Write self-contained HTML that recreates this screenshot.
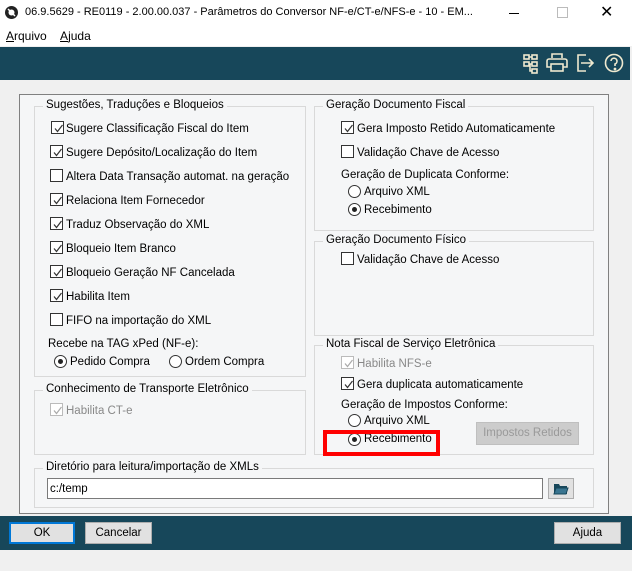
<!DOCTYPE html>
<html><head><meta charset="utf-8"><style>
*{box-sizing:border-box;margin:0;padding:0}
body{width:632px;height:571px;position:relative;overflow:hidden;background:#f0f0f0;font-family:"Liberation Sans",sans-serif;font-size:11.5px;color:#000}
.a{position:absolute}
.gb{position:absolute;border:1px solid #d9d9d9}
.gl{position:absolute;top:-8px;left:8px;background:#f5f6f7;padding:0 3px;white-space:nowrap;color:#000}
.cb{position:absolute;width:13px;height:13px;border:1px solid #333;background:#fff}
.cb.d{border-color:#bbb}
.cb svg{position:absolute;left:1px;top:1px}
.t{position:absolute;white-space:nowrap;margin-top:2px}
.rd{position:absolute;width:13px;height:13px;border:1px solid #333;border-radius:50%;background:#fff;margin-top:1px}
.rd.on::after{content:"";position:absolute;left:3px;top:3px;width:5px;height:5px;border-radius:50%;background:#222}
.btn{position:absolute;background:#e1e1e1;border:1px solid #adadad;text-align:center;line-height:20px}
</style></head><body>
<div class="a" style="left:0;top:0;width:632px;height:46px;background:#fff"></div>
<svg class="a" style="left:4px;top:5px" width="15" height="15" viewBox="0 0 15 15"><circle cx="7.5" cy="7.5" r="6.5" fill="#222"/><circle cx="7.5" cy="7.5" r="3" fill="#fff"/><path d="M4 4 L11 11" stroke="#fff" stroke-width="1.5"/></svg>
<div class="a" style="left:25px;top:6px;font-size:11px;white-space:nowrap">06.9.5629 - RE0119 - 2.00.00.037 - Parâmetros do Conversor NF-e/CT-e/NFS-e - 10 - EM...</div>
<div class="a" style="left:509px;top:13px;width:10px;height:1px;background:#000"></div>
<div class="a" style="left:557px;top:7px;width:11px;height:11px;border:1px solid #bbb"></div>
<div class="a" style="left:600px;top:2px;font-size:16px">✕</div>
<div class="a" style="left:6px;top:29px;font-size:12px;white-space:nowrap"><u>A</u>rquivo &nbsp; &nbsp;<u>A</u>juda</div>
<div class="a" style="left:0;top:47px;width:630px;height:33px;background:#17475a"></div>
<svg class="a" style="left:520px;top:50px" width="110" height="26" viewBox="0 0 110 26" fill="none" stroke="#efe9cf" stroke-width="1.6">
<rect x="4" y="5" width="5" height="4"/><rect x="4" y="12" width="5" height="4"/><rect x="12" y="5" width="5" height="4"/><rect x="12" y="12" width="5" height="4"/><rect x="12" y="19" width="5" height="4"/><path d="M9 7h3M9 14h3M10 14v7h2"/>
<path d="M32 8V4h10v4M29 9h16a2 2 0 0 1 2 2v6h-4M31 17h-4v-6a2 2 0 0 1 2-2"/><rect x="31" y="14" width="12" height="7"/>
<path d="M66 5h-8v16h8M61 13h12M69 9l4 4-4 4"/>
<circle cx="94" cy="13" r="8.5"/><path d="M91 11a3 3 0 1 1 4 3v2"/><circle cx="95" cy="19" r=".6" fill="#efe9cf"/>
</svg>
<div class="a" style="left:19px;top:94px;width:590px;height:420px;border:1px solid #808080;background:#f5f6f7"></div>

<div class="gb" style="left:34px;top:106px;width:272px;height:271px"><div class="gl">Sugestões, Traduções e Bloqueios</div></div>
<div class="gb" style="left:34px;top:390px;width:272px;height:65px"><div class="gl">Conhecimento de Transporte Eletrônico</div></div>
<div class="gb" style="left:314px;top:106px;width:280px;height:125px"><div class="gl">Geração Documento Fiscal</div></div>
<div class="gb" style="left:314px;top:241px;width:280px;height:95px"><div class="gl">Geração Documento Físico</div></div>
<div class="gb" style="left:314px;top:345px;width:280px;height:110px"><div class="gl">Nota Fiscal de Serviço Eletrônica</div></div>
<div class="gb" style="left:34px;top:468px;width:560px;height:40px"><div class="gl">Diretório para leitura/importação de XMLs</div></div>

<div class="cb" style="left:51px;top:121px"><svg width="11" height="11"><path d="M2 5.5l2.5 3L9.5 2" stroke="#333" fill="none" stroke-width="1.2"/></svg></div><div class="t" style="left:66px;top:121px">Sugere Classificação Fiscal do Item</div>
<div class="cb" style="left:50px;top:145px"><svg width="11" height="11"><path d="M2 5.5l2.5 3L9.5 2" stroke="#333" fill="none" stroke-width="1.2"/></svg></div><div class="t" style="left:66px;top:145px">Sugere Depósito/Localização do Item</div>
<div class="cb" style="left:50px;top:169px"></div><div class="t" style="left:66px;top:169px">Altera Data Transação automat. na geração</div>
<div class="cb" style="left:50px;top:193px"><svg width="11" height="11"><path d="M2 5.5l2.5 3L9.5 2" stroke="#333" fill="none" stroke-width="1.2"/></svg></div><div class="t" style="left:66px;top:193px">Relaciona Item Fornecedor</div>
<div class="cb" style="left:50px;top:217px"><svg width="11" height="11"><path d="M2 5.5l2.5 3L9.5 2" stroke="#333" fill="none" stroke-width="1.2"/></svg></div><div class="t" style="left:66px;top:217px">Traduz Observação do XML</div>
<div class="cb" style="left:50px;top:241px"><svg width="11" height="11"><path d="M2 5.5l2.5 3L9.5 2" stroke="#333" fill="none" stroke-width="1.2"/></svg></div><div class="t" style="left:66px;top:241px">Bloqueio Item Branco</div>
<div class="cb" style="left:50px;top:265px"><svg width="11" height="11"><path d="M2 5.5l2.5 3L9.5 2" stroke="#333" fill="none" stroke-width="1.2"/></svg></div><div class="t" style="left:66px;top:265px">Bloqueio Geração NF Cancelada</div>
<div class="cb" style="left:50px;top:289px"><svg width="11" height="11"><path d="M2 5.5l2.5 3L9.5 2" stroke="#333" fill="none" stroke-width="1.2"/></svg></div><div class="t" style="left:66px;top:289px">Habilita Item</div>
<div class="cb" style="left:50px;top:313px"></div><div class="t" style="left:66px;top:313px">FIFO na importação do XML</div>
<div class="t" style="left:48px;top:336px">Recebe na TAG xPed (NF-e):</div>
<div class="rd on" style="left:54px;top:354px"></div><div class="t" style="left:70px;top:354px">Pedido Compra</div>
<div class="rd" style="left:169px;top:354px"></div><div class="t" style="left:185px;top:354px">Ordem Compra</div>
<div class="cb d" style="left:50px;top:403px"><svg width="11" height="11"><path d="M2 5.5l2.5 3L9.5 2" stroke="#aaa" fill="none" stroke-width="1.2"/></svg></div><div class="t" style="left:66px;top:403px;color:#888">Habilita CT-e</div>

<div class="cb" style="left:341px;top:121px"><svg width="11" height="11"><path d="M2 5.5l2.5 3L9.5 2" stroke="#333" fill="none" stroke-width="1.2"/></svg></div><div class="t" style="left:357px;top:121px">Gera Imposto Retido Automaticamente</div>
<div class="cb" style="left:341px;top:145px"></div><div class="t" style="left:357px;top:145px">Validação Chave de Acesso</div>
<div class="t" style="left:341px;top:167px">Geração de Duplicata Conforme:</div>
<div class="rd" style="left:348px;top:184px"></div><div class="t" style="left:364px;top:184px">Arquivo XML</div>
<div class="rd on" style="left:348px;top:202px"></div><div class="t" style="left:364px;top:202px">Recebimento</div>
<div class="cb" style="left:341px;top:252px"></div><div class="t" style="left:357px;top:252px">Validação Chave de Acesso</div>
<div class="cb d" style="left:341px;top:356px"><svg width="11" height="11"><path d="M2 5.5l2.5 3L9.5 2" stroke="#aaa" fill="none" stroke-width="1.2"/></svg></div><div class="t" style="left:357px;top:356px;color:#888">Habilita NFS-e</div>
<div class="cb" style="left:341px;top:377px"><svg width="11" height="11"><path d="M2 5.5l2.5 3L9.5 2" stroke="#333" fill="none" stroke-width="1.2"/></svg></div><div class="t" style="left:357px;top:377px">Gera duplicata automaticamente</div>
<div class="t" style="left:341px;top:397px">Geração de Impostos Conforme:</div>
<div class="rd" style="left:348px;top:413px"></div><div class="t" style="left:364px;top:413px">Arquivo XML</div>
<div class="rd on" style="left:348px;top:432px"></div><div class="t" style="left:364px;top:431px">Recebimento</div>
<div class="btn" style="left:476px;top:422px;width:103px;height:23px;color:#999;background:#ccc;border-color:#bfbfbf">Impostos Retidos</div>
<div class="a" style="left:323px;top:430px;width:117px;height:26px;border:4px solid #f00"></div>

<div class="a" style="left:47px;top:478px;width:496px;height:21px;border:1px solid #7a7a7a;background:#fff;padding:4px 2px;white-space:nowrap">c:/temp</div>
<div class="btn" style="left:548px;top:478px;width:26px;height:21px"><svg width="16" height="12" viewBox="0 0 16 12" style="margin-top:4px"><path d="M1 1h5l1 2h7v8H1z" fill="#17475a"/><path d="M3 5h12l-2 6H1z" fill="#3a7590" stroke="#17475a"/></svg></div>

<div class="a" style="left:0;top:516px;width:632px;height:34px;background:#17475a"></div>
<div class="btn" style="left:9px;top:522px;width:66px;height:22px;border:2px solid #0078d7;line-height:19px">OK</div>
<div class="btn" style="left:85px;top:522px;width:67px;height:22px">Cancelar</div>
<div class="btn" style="left:554px;top:522px;width:67px;height:22px">Ajuda</div>
</body></html>
